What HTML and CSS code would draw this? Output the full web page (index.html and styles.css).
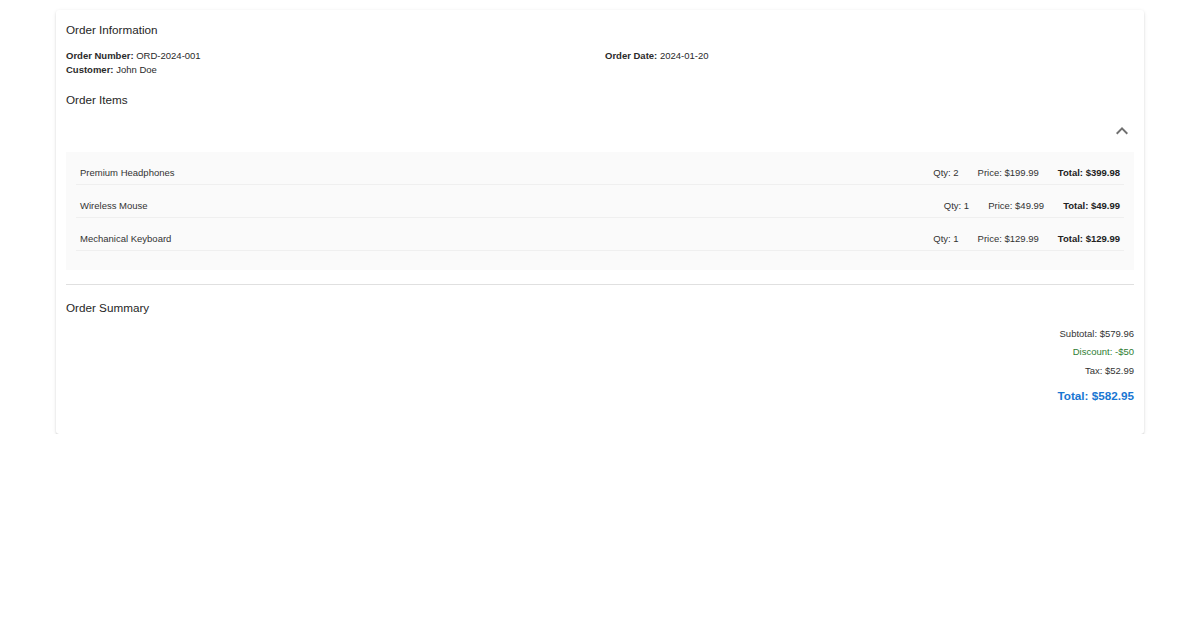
FILE: index.html
```html
<!DOCTYPE html>
<html lang="en">
<head>
    <meta charset="UTF-8">
    <meta name="viewport" content="width=device-width, initial-scale=1.0">
    <title>Order Details</title>
    <link rel="stylesheet" href="styles.css">
</head>
<body>
    <div class="order-card">
        <h2 class="section-title">Order Information</h2>
        <div class="info-grid">
            <div class="info-col">
                <div class="info-line"><b>Order Number:</b> ORD-2024-001</div>
                <div class="info-line"><b>Customer:</b> John Doe</div>
            </div>
            <div class="info-col">
                <div class="info-line"><b>Order Date:</b> 2024-01-20</div>
            </div>
        </div>

        <h2 class="section-title items-title">Order Items</h2>
        <div class="toggle-row">
            <button class="toggle-btn" aria-label="collapse">
                <svg viewBox="0 0 24 24" width="24" height="24"><path d="M12 8l-6 6 1.41 1.41L12 10.83l4.59 4.58L18 14z"/></svg>
            </button>
        </div>
        <div class="items-box">
            <div class="item-row">
                <span class="item-name">Premium Headphones</span>
                <div class="item-meta">
                    <span>Qty: 2</span>
                    <span>Price: $199.99</span>
                    <span class="item-total">Total: $399.98</span>
                </div>
            </div>
            <div class="item-row">
                <span class="item-name">Wireless Mouse</span>
                <div class="item-meta">
                    <span>Qty: 1</span>
                    <span>Price: $49.99</span>
                    <span class="item-total">Total: $49.99</span>
                </div>
            </div>
            <div class="item-row">
                <span class="item-name">Mechanical Keyboard</span>
                <div class="item-meta">
                    <span>Qty: 1</span>
                    <span>Price: $129.99</span>
                    <span class="item-total">Total: $129.99</span>
                </div>
            </div>
        </div>

        <hr class="divider">

        <h2 class="section-title summary-title">Order Summary</h2>
        <div class="summary">
            <div class="summary-line">Subtotal: $579.96</div>
            <div class="summary-line discount">Discount: -$50</div>
            <div class="summary-line">Tax: $52.99</div>
            <div class="summary-total">Total: $582.95</div>
        </div>
    </div>
</body>
</html>
```

FILE: styles.css
```css
body {
    margin: 0;
    background: #ffffff;
    font-family: "Liberation Sans", Arial, sans-serif;
    color: #222222;
}
.order-card {
    margin: 10px 56px 0;
    padding: 12px 10px 30px;
    background: #ffffff;
    border-radius: 3px;
    box-shadow: 0 2px 2px -1px rgba(0, 0, 0, 0.16), 0 1px 2px 0 rgba(0, 0, 0, 0.1), 0 1px 4px 0 rgba(0, 0, 0, 0.08);
}
.section-title {
    margin: 0;
    font-size: 11.7px;
    font-weight: 400;
    line-height: 16px;
    color: #262626;
}
.info-grid {
    display: grid;
    grid-template-columns: 1fr 1fr;
    column-gap: 10px;
    margin-top: 10.5px;
}
.info-line {
    font-size: 9.5px;
    line-height: 14px;
    color: #2a2a2a;
}
.items-title {
    margin-top: 15.5px;
}
.toggle-row {
    display: flex;
    justify-content: flex-end;
    margin-top: 11px;
    height: 24px;
}
.toggle-btn {
    background: none;
    border: none;
    padding: 0;
    width: 24px;
    height: 24px;
    cursor: pointer;
}
.toggle-btn svg {
    display: block;
    fill: #707070;
}
.items-box {
    margin-top: 9px;
    background: #fafafa;
    padding: 0 10px 19px;
}
.item-row {
    display: flex;
    justify-content: space-between;
    align-items: center;
    padding: 15px 4px 5px;
    border-bottom: 1px solid #efefef;
    font-size: 9.5px;
    line-height: 12px;
    color: #333333;
}
.item-meta {
    display: flex;
    gap: 19px;
}
.item-total {
    font-weight: 700;
    color: #222222;
}
.divider {
    margin: 14px 0 0;
    border: none;
    border-top: 1px solid #e0e0e0;
}
.summary-title {
    margin-top: 15px;
}
.summary {
    display: flex;
    flex-direction: column;
    align-items: flex-end;
    gap: 4.5px;
    margin-top: 10.5px;
}
.summary-line {
    font-size: 9.5px;
    line-height: 14px;
    color: #333333;
}
.summary-line.discount {
    color: #2e7d32;
}
.summary-total {
    margin-top: 5.5px;
    font-size: 11.7px;
    line-height: 16px;
    font-weight: 700;
    color: #1976d2;
}
```
